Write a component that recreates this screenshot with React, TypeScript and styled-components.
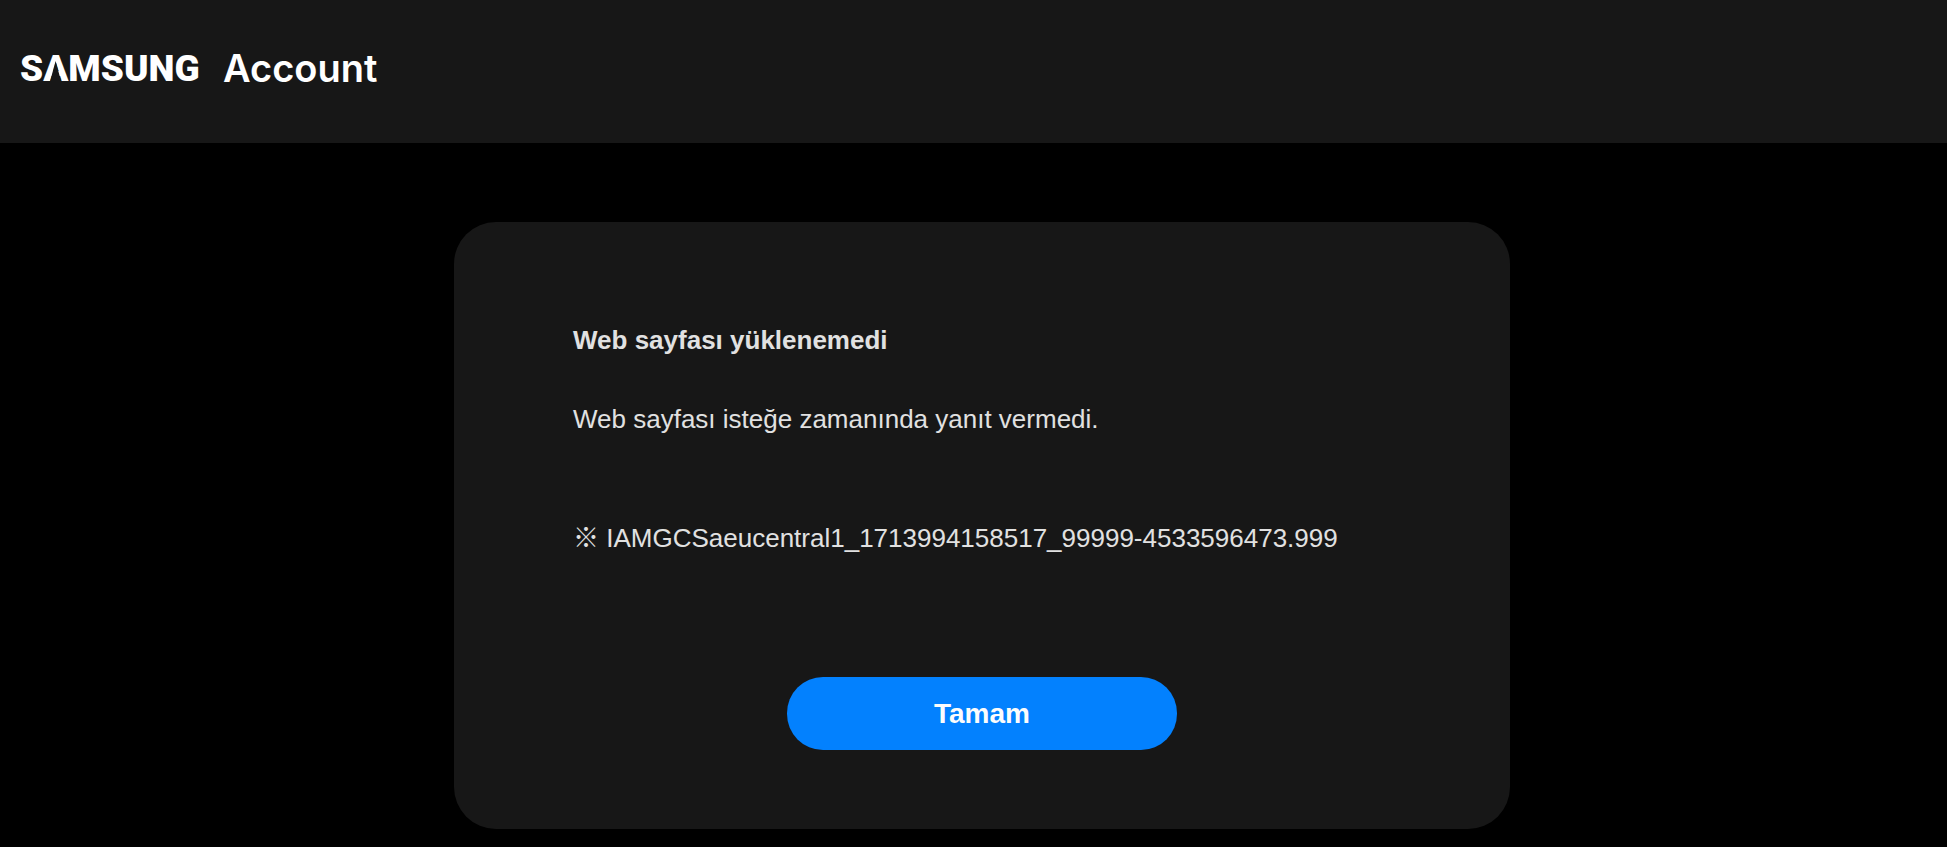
import React from "react";
import styled, { createGlobalStyle } from "styled-components";

const GlobalStyle = createGlobalStyle`
  *, *::before, *::after { box-sizing: border-box; }
  html, body { margin: 0; background: #000; }
  body {
    color: #e1e1e1;
    font-family: "Liberation Sans", Arial, "Noto Sans CJK KR", sans-serif;
    font-size: 26px;
    line-height: 40px;
  }
`;

const Page = styled.div`
  display: flex;
  flex-direction: column;
`;

const Header = styled.header`
  display: flex;
  height: 143px;
  padding: 44px 20px 0;
  background: #171717;
`;

const HomeLink = styled.a`
  display: block;
  height: 48px;
`;

const Main = styled.main`
  padding: 79px 0 17px 17px;
`;

const Card = styled.section`
  display: flex;
  flex-direction: column;
  max-width: 1056px;
  margin: 0 auto;
  padding: 98px 119px 79px;
  border-radius: 42px;
  background: #171717;
`;

const Title = styled.h1`
  margin: 0 0 39px;
  font-size: 26px;
  font-weight: 700;
  line-height: 40px;
`;

const Message = styled.p`
  margin: 0 0 79px;
`;

const ErrorCode = styled.p`
  margin: 0;
  overflow-wrap: anywhere;
`;

const Actions = styled.div`
  display: flex;
  justify-content: center;
  margin-top: 119px;
`;

const PrimaryButton = styled.button`
  width: 390px;
  max-width: 100%;
  height: 73px;
  border: 0;
  border-radius: 36px;
  background: #0381fe;
  color: #fcfcfc;
  font: inherit;
  font-size: 28px;
  font-weight: 700;
  cursor: pointer;
`;

/* The wedge opens the first A of the wordmark, which has no crossbar. */
const Logo = () => (
  <svg width="366" height="48" viewBox="0 0 366 48" fill="#fff" role="img" aria-label="SAMSUNG Account">
    <text x="0" y="37" fontFamily="Roboto, sans-serif" fontSize="37" fontWeight="900">SAMSUNG</text>
    <polygon points="35.6,17 29.9,38 41.3,38" fill="#171717" />
    <text x="203" y="38" fontFamily="Inter, sans-serif" fontSize="38" fontWeight="600">Account</text>
  </svg>
);

export default function App() {
  return (
    <Page>
      <GlobalStyle />
      <Header>
        <HomeLink href="#" aria-label="SAMSUNG Account">
          <Logo />
        </HomeLink>
      </Header>
      <Main>
        <Card>
          <Title>Web sayfası yüklenemedi</Title>
          <Message>Web sayfası isteğe zamanında yanıt vermedi.</Message>
          <ErrorCode>※ IAMGCSaeucentral1_1713994158517_99999-4533596473.999</ErrorCode>
          <Actions>
            <PrimaryButton type="button">Tamam</PrimaryButton>
          </Actions>
        </Card>
      </Main>
    </Page>
  );
}
